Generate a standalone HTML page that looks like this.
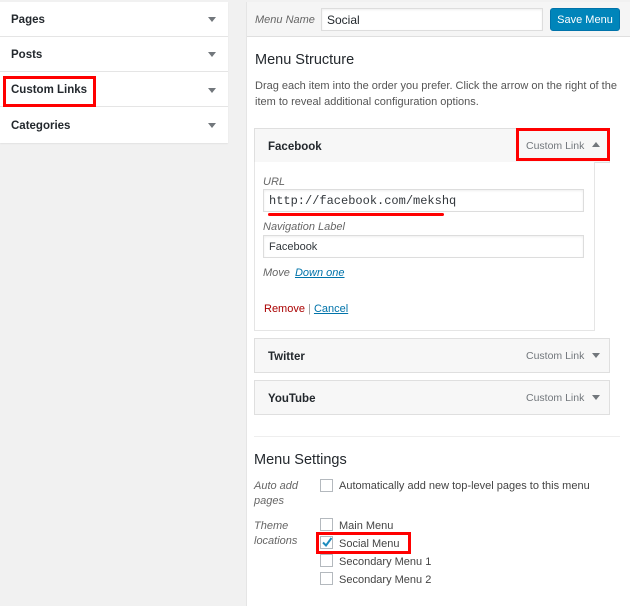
<!DOCTYPE html>
<html><head><style>
*{margin:0;padding:0;box-sizing:border-box}
body{width:630px;height:606px;background:#f1f1f1;font-family:"Liberation Sans",sans-serif;font-size:13px;color:#23282d;position:relative;overflow:hidden}
.a{position:absolute}
.row{position:absolute;left:0;width:228px;height:35px;background:#fff;border-bottom:1px solid #e5e5e5;font-weight:bold;font-size:11.5px;padding:12px 0 0 11px}
.tri{position:absolute;width:0;height:0;border-left:4px solid transparent;border-right:4px solid transparent;border-top:5px solid #72777c}
.trup{position:absolute;width:0;height:0;border-left:4px solid transparent;border-right:4px solid transparent;border-bottom:5px solid #72777c}
.red{position:absolute;border:3px solid #f00}
.item{position:absolute;left:254px;width:356px;height:35px;background:#f7f7f7;border:1px solid #dfdfdf;font-weight:bold;font-size:11.5px;padding:11px 0 0 13px}
.cl{position:absolute;left:271px;top:11px;font-weight:normal;font-size:10.5px;color:#72777c}
.lbl{position:absolute;font-style:italic;color:#666;font-size:11px}
.inp{position:absolute;background:#fff;border:1px solid #ddd;box-shadow:inset 0 1px 2px rgba(0,0,0,.07)}
.cb{position:absolute;left:320px;width:13px;height:13px;border:1px solid #b4b9be;background:#fff}
.ct{position:absolute;left:339px;font-size:11px;color:#444}
</style></head><body>
<div class="a" style="left:0;top:2px;width:228px;height:141px;background:#fff;box-shadow:0 1px 1px rgba(0,0,0,.06)"></div>
<div class="row" style="top:2px">Pages</div>
<div class="row" style="top:37px">Posts</div>
<div class="row" style="top:72px">Custom Links</div>
<div class="row" style="top:108px;border-bottom:none">Categories</div>
<div class="tri" style="left:208px;top:17px"></div>
<div class="tri" style="left:208px;top:52px"></div>
<div class="tri" style="left:208px;top:88px"></div>
<div class="tri" style="left:208px;top:123px"></div>
<div class="red" style="left:3px;top:76px;width:93px;height:31px"></div>

<div class="a" style="left:246px;top:2px;width:384px;height:604px;background:#fff;border-left:1px solid #e5e5e5"></div>
<div class="a" style="left:247px;top:2px;width:383px;height:35px;background:#f5f5f5;border-bottom:1px solid #dfdfdf"></div>
<div class="lbl" style="left:255px;top:14px;font-size:11px">Menu Name</div>
<div class="inp" style="left:321px;top:8px;width:222px;height:23px;padding:4px 0 0 5px;font-size:12px">Social</div>
<div class="a" style="left:550px;top:8px;width:70px;height:23px;background:#0085ba;border:1px solid #0073aa;border-radius:3px;color:#fff;font-size:11px;text-align:center;line-height:22px">Save Menu</div>

<div class="a" style="left:255px;top:52px;font-size:14.5px">Menu Structure</div>
<div class="a" style="left:255px;top:79px;font-size:11px;color:#555;line-height:15.5px;width:370px">Drag each item into the order you prefer. Click the arrow on the right of the item to reveal additional configuration options.</div>

<div class="item" style="top:128px;padding-top:12px">Facebook<span class="cl">Custom Link</span></div>
<div class="trup" style="left:592px;top:142px"></div>
<div class="a" style="left:254px;top:162px;width:341px;height:169px;border:1px solid #e5e5e5;border-top:none;background:#fff"></div>
<div class="lbl" style="left:263px;top:176px">URL</div>
<div class="inp" style="left:263px;top:189px;width:321px;height:23px;padding:4px 0 0 5px;font-family:'Liberation Mono',monospace;font-size:12px;color:#32373c">http://facebook.com/mekshq</div>
<div class="a" style="left:268px;top:213px;width:176px;height:3px;background:#f00;border-radius:2px"></div>
<div class="lbl" style="left:263px;top:221px">Navigation Label</div>
<div class="inp" style="left:263px;top:235px;width:321px;height:23px;padding:5px 0 0 5px;font-size:11px;color:#32373c">Facebook</div>
<div class="lbl" style="left:263px;top:267px;font-size:11px">Move <span style="color:#0073aa;text-decoration:underline;margin-left:2px">Down one</span></div>
<div class="a" style="left:264px;top:303px;font-size:11px;color:#a00">Remove <span style="color:#999">|</span> <span style="color:#0073aa;text-decoration:underline">Cancel</span></div>
<div class="red" style="left:516px;top:128px;width:94px;height:33px"></div>

<div class="item" style="top:338px;padding-top:12px">Twitter<span class="cl">Custom Link</span></div>
<div class="tri" style="left:592px;top:353px"></div>
<div class="item" style="top:380px;padding-top:12px">YouTube<span class="cl">Custom Link</span></div>
<div class="tri" style="left:592px;top:395px"></div>

<div class="a" style="left:254px;top:436px;width:366px;height:1px;background:#eee"></div>
<div class="a" style="left:254px;top:452px;font-size:14.5px">Menu Settings</div>
<div class="lbl" style="left:254px;top:479px;line-height:15px">Auto add<br>pages</div>
<div class="cb" style="top:479px"></div>
<div class="ct" style="top:480px">Automatically add new top-level pages to this menu</div>
<div class="lbl" style="left:254px;top:519px;line-height:15px">Theme<br>locations</div>
<div class="cb" style="top:518px"></div><div class="ct" style="top:520px">Main Menu</div>
<div class="cb" style="top:536px"></div><div class="ct" style="top:538px">Social Menu</div>
<svg class="a" style="left:320px;top:535px" width="14" height="14"><path d="M3 7.5 L6 10.5 L11.5 3" stroke="#1e8cbe" stroke-width="2" fill="none"/></svg>
<div class="cb" style="top:554px"></div><div class="ct" style="top:556px">Secondary Menu 1</div>
<div class="cb" style="top:572px"></div><div class="ct" style="top:574px">Secondary Menu 2</div>
<div class="red" style="left:316px;top:532px;width:95px;height:22px"></div>
</body></html>
